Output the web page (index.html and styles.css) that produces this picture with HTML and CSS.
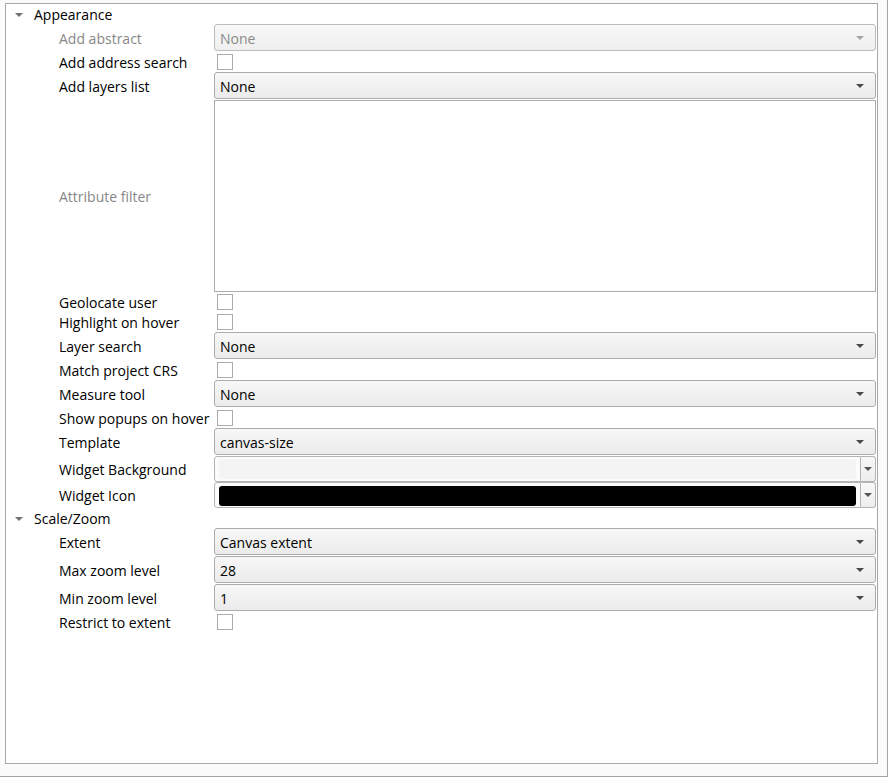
FILE: index.html
```html
<!DOCTYPE html>
<html>
<head>
<meta charset="utf-8">
<link rel="stylesheet" href="styles.css">
</head>
<body>
<div class="window">
  <div class="panel">
    <div class="group"><span class="caret"></span><span class="group-title">Appearance</span></div>

    <div class="row r-combo">
      <span class="lbl disabled">Add abstract</span>
      <div class="combo disabled"><span class="val">None</span><i class="arrow"></i></div>
    </div>
    <div class="row r-check">
      <span class="lbl">Add address search</span>
      <span class="check"></span>
    </div>
    <div class="row r-combo">
      <span class="lbl">Add layers list</span>
      <div class="combo"><span class="val">None</span><i class="arrow"></i></div>
    </div>
    <div class="row r-text">
      <span class="lbl disabled">Attribute filter</span>
      <div class="textbox"></div>
    </div>
    <div class="row r-check">
      <span class="lbl">Geolocate user</span>
      <span class="check"></span>
    </div>
    <div class="row r-check">
      <span class="lbl">Highlight on hover</span>
      <span class="check"></span>
    </div>
    <div class="row r-combo">
      <span class="lbl">Layer search</span>
      <div class="combo"><span class="val">None</span><i class="arrow"></i></div>
    </div>
    <div class="row r-check">
      <span class="lbl">Match project CRS</span>
      <span class="check"></span>
    </div>
    <div class="row r-combo">
      <span class="lbl">Measure tool</span>
      <div class="combo"><span class="val">None</span><i class="arrow"></i></div>
    </div>
    <div class="row r-check">
      <span class="lbl">Show popups on hover</span>
      <span class="check"></span>
    </div>
    <div class="row r-combo">
      <span class="lbl">Template</span>
      <div class="combo"><span class="val">canvas-size</span><i class="arrow"></i></div>
    </div>
    <div class="row r-color">
      <span class="lbl">Widget Background</span>
      <div class="colorbtn">
        <div class="swatch-wrap"><div class="swatch light"></div></div>
        <div class="colordrop"><i class="arrow small"></i></div>
      </div>
    </div>
    <div class="row r-color">
      <span class="lbl">Widget Icon</span>
      <div class="colorbtn">
        <div class="swatch-wrap"><div class="swatch dark"></div></div>
        <div class="colordrop"><i class="arrow small"></i></div>
      </div>
    </div>

    <div class="group"><span class="caret"></span><span class="group-title">Scale/Zoom</span></div>

    <div class="row r-combo">
      <span class="lbl">Extent</span>
      <div class="combo"><span class="val">Canvas extent</span><i class="arrow"></i></div>
    </div>
    <div class="row r-combo">
      <span class="lbl">Max zoom level</span>
      <div class="combo"><span class="val">28</span><i class="arrow"></i></div>
    </div>
    <div class="row r-combo">
      <span class="lbl">Min zoom level</span>
      <div class="combo"><span class="val">1</span><i class="arrow"></i></div>
    </div>
    <div class="row r-check">
      <span class="lbl">Restrict to extent</span>
      <span class="check"></span>
    </div>
  </div>
</div>
</body>
</html>
```

FILE: styles.css
```css
* { box-sizing: border-box; }

html, body {
  margin: 0;
  padding: 0;
  background: #ffffff;
}

body {
  font-family: "Open Sans", "Noto Sans", "Liberation Sans", sans-serif;
  font-size: 14px;
  color: #000000;
}

.window {
  width: 888px;
  height: 777px;
  background: #fbfbfb;
  border-right: 1px solid #a3a3a3;
  border-bottom: 1px solid #a3a3a3;
  padding: 3px 0 0 5px;
}

.panel {
  width: 873px;
  height: 761px;
  background: #ffffff;
  border: 1px solid #a8a8a8;
  display: flex;
  flex-direction: column;
}

.group {
  height: 20px;
  display: flex;
  align-items: center;
  padding-left: 9px;
}

.caret {
  width: 0;
  height: 0;
  border-left: 4px solid transparent;
  border-right: 4px solid transparent;
  border-top: 4px solid #707070;
  margin-right: 11px;
  margin-top: 1px;
}

.group-title {
  color: #000000;
}

.row {
  display: flex;
  align-items: center;
}

.lbl {
  width: 208px;
  flex: 0 0 208px;
  padding-left: 53px;
  white-space: nowrap;
  color: #000000;
}

.lbl.disabled { color: #878787; }

.r-check { height: 20px; }
.r-combo { height: 28px; }
.r-color { height: 26px; }
.r-text { height: 192px; }

.check {
  width: 16px;
  height: 16px;
  border: 1px solid #ababab;
  background: #ffffff;
  margin-left: 3px;
}

.combo {
  align-self: flex-start;
  width: 662px;
  height: 27px;
  border: 1px solid #acacac;
  border-radius: 3px;
  background: linear-gradient(#f7f7f7, #ebebeb);
  display: flex;
  align-items: center;
  justify-content: space-between;
  padding: 1px 11px 0 5px;
  color: #000;
}

.combo.disabled {
  color: #8a8a8a;
  border-color: #bdbdbd;
  background: linear-gradient(#f8f8f8, #efefef);
}

.arrow {
  display: block;
  width: 0;
  height: 0;
  border-left: 4px solid transparent;
  border-right: 4px solid transparent;
  border-top: 4px solid #4a4a4a;
}

.combo.disabled .arrow { border-top-color: #a5a5a5; }

.textbox {
  width: 662px;
  height: 192px;
  border: 1px solid #acacac;
  background: #ffffff;
}

.colorbtn {
  width: 662px;
  height: 26px;
  display: flex;
}

.swatch-wrap {
  flex: 0 0 647px;
  height: 26px;
  border: 1px solid #b4b4b4;
  border-radius: 3px 0 0 3px;
  background: #fbfbfb;
  padding: 2px 4px 2px 4px;
}

.swatch {
  width: 100%;
  height: 100%;
  border-radius: 3px;
}

.swatch.light { background: #f4f4f4; }
.swatch.dark { background: #000000; margin-top: 1px; height: 20px; }

.colordrop {
  flex: 0 0 15px;
  height: 26px;
  border: 1px solid #b4b4b4;
  border-left: none;
  border-radius: 0 3px 3px 0;
  background: linear-gradient(#f8f8f8, #ededed);
  display: flex;
  align-items: center;
  justify-content: center;
}

.arrow.small {
  border-left-width: 4px;
  border-right-width: 4px;
  border-top-width: 4px;
  border-top-color: #555;
}
```
